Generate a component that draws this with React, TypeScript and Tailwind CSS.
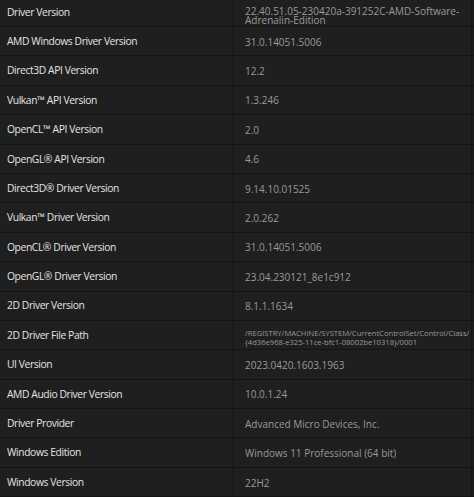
import React from 'react';

type Row = { label: string; value: string[]; small?: boolean };

const rows: Row[] = [
  { label: 'Driver Version', value: ['22.40.51.05-230420a-391252C-AMD-Software-', 'Adrenalin-Edition'] },
  { label: 'AMD Windows Driver Version', value: ['31.0.14051.5006'] },
  { label: 'Direct3D API Version', value: ['12.2'] },
  { label: 'Vulkan™ API Version', value: ['1.3.246'] },
  { label: 'OpenCL™ API Version', value: ['2.0'] },
  { label: 'OpenGL® API Version', value: ['4.6'] },
  { label: 'Direct3D® Driver Version', value: ['9.14.10.01525'] },
  { label: 'Vulkan™ Driver Version', value: ['2.0.262'] },
  { label: 'OpenCL® Driver Version', value: ['31.0.14051.5006'] },
  { label: 'OpenGL® Driver Version', value: ['23.04.230121_8e1c912'] },
  { label: '2D Driver Version', value: ['8.1.1.1634'] },
  {
    label: '2D Driver File Path',
    value: ['/REGISTRY/MACHINE/SYSTEM/CurrentControlSet/Control/Class/', '{4d36e968-e325-11ce-bfc1-08002be10318}/0001'],
    small: true,
  },
  { label: 'UI Version', value: ['2023.0420.1603.1963'] },
  { label: 'AMD Audio Driver Version', value: ['10.0.1.24'] },
  { label: 'Driver Provider', value: ['Advanced Micro Devices, Inc.'] },
  { label: 'Windows Edition', value: ['Windows 11 Professional (64 bit)'] },
  { label: 'Windows Version', value: ['22H2'] },
];

export default function App() {
  return (
    <div
      className="w-[474px] h-[497px] overflow-hidden bg-[#1f1f1f]"
      style={{ fontFamily: '"Open Sans", "Noto Sans", sans-serif' }}
    >
      <div className="-mt-[2.4px]">
        {rows.map((row, i) => {
          const multi = row.value.length > 1;
          const valueCls = row.small
            ? 'text-[7.6px] leading-[9px] pt-[5px]'
            : multi
              ? 'text-[10px] leading-[9px] pt-[8px]'
              : 'text-[10px] leading-[14px] pt-[1px]';
          return (
            <div key={i} className="flex h-[29.4px] border-b border-[#141414]">
              {/* label */}
              <div className="w-[234px] shrink-0 flex items-center pl-[7px] pt-[1px] border-r border-[#141414] text-[10.3px] tracking-[-0.4px] text-[#e4e4e4]">
                {row.label}
              </div>
              {/* value */}
              <div
                className={`w-[238px] shrink-0 flex flex-col justify-center pl-[11px] border-r border-[#141414] text-[#9a9a9a] ${valueCls}`}
              >
                {row.value.map((v, j) => (
                  <div key={j}>{v}</div>
                ))}
              </div>
              <div className="flex-1 bg-[#1c1c1c]" />
            </div>
          );
        })}
      </div>
    </div>
  );
}
